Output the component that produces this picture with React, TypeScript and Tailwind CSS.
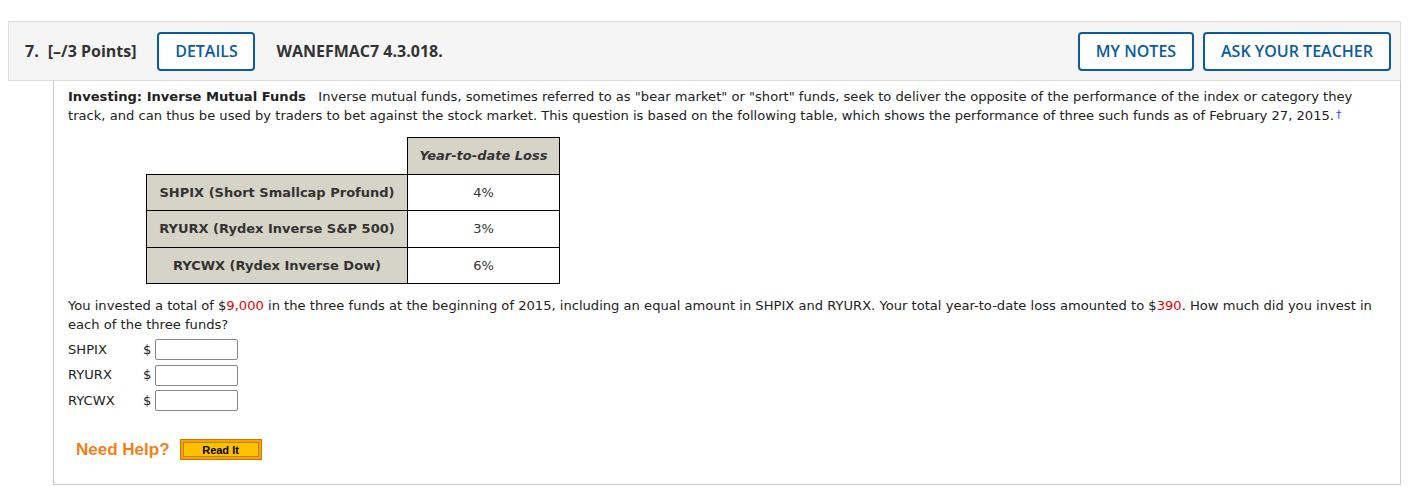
import React from "react";

const rows = [
  { name: "SHPIX (Short Smallcap Profund)", loss: "4%" },
  { name: "RYURX (Rydex Inverse S&P 500)", loss: "3%" },
  { name: "RYCWX (Rydex Inverse Dow)", loss: "6%" },
];

const funds = ["SHPIX", "RYURX", "RYCWX"];

function OutlineButton({ label, className = "" }: { label: string; className?: string }) {
  return (
    <button
      className={`h-[39px] rounded-[4px] border-2 border-[#0b5c9e] bg-white text-[16px] font-semibold text-[#0b5c9e] ${className}`}
    >
      {label}
    </button>
  );
}

export default function App() {
  return (
    <div className="min-h-[487px] w-[1418px] bg-white pl-2 pt-[21px]">
      <div className="w-[1393px]">
        <div
          className="flex h-[60px] items-center border border-[#dedede] bg-[#f5f5f5] pl-4 pr-[9px] text-[#333]"
          style={{ fontFamily: '"Open Sans", "Noto Sans", sans-serif' }}
        >
          <span className="text-[16px] font-bold">7.</span>
          <span className="ml-[9px] text-[16px] font-bold">[–/3 Points]</span>
          <OutlineButton label="DETAILS" className="ml-[21px] w-[98px]" />
          <span className="ml-[21px] text-[16px] font-bold">WANEFMAC7 4.3.018.</span>
          <div className="ml-auto flex gap-[9px]">
            <OutlineButton label="MY NOTES" className="w-[116px]" />
            <OutlineButton label="ASK YOUR TEACHER" className="w-[188px]" />
          </div>
        </div>

        <div
          className="ml-[45px] h-[404px] border-x border-b border-[#cccccc] pl-[14px] pr-4 pt-[6px] text-[13.1px] text-[#222]"
          style={{ fontFamily: '"DejaVu Sans", Verdana, sans-serif' }}
        >
          <p className="leading-[19px]">
            <b>Investing: Inverse Mutual Funds</b>
            {"\u00a0\u00a0 "}Inverse mutual funds, sometimes referred to as "bear market" or "short" funds, seek to
            deliver the opposite of the performance of the index or category they track, and can thus be used by
            traders to bet against the stock market. This question is based on the following table, which shows the
            performance of three such funds as of February 27, 2015.
            <span className="relative -top-[2px] ml-[2px] text-[11px] text-[#3b3bff]">†</span>
          </p>

          <table className="ml-[78px] mt-[11px] border-collapse text-[13px]">
            <tbody>
              <tr>
                <td className="w-[261px]"></td>
                <td className="h-[36.5px] w-[152px] border border-black bg-[#d6d3c7] text-center font-bold italic text-[#333]">
                  Year-to-date Loss
                </td>
              </tr>
              {rows.map((r) => (
                <tr key={r.name}>
                  <td className="h-[36.5px] border border-black bg-[#d6d3c7] text-center font-bold text-[#333]">
                    {r.name}
                  </td>
                  <td className="border border-black text-center text-[#333]">{r.loss}</td>
                </tr>
              ))}
            </tbody>
          </table>

          <p className="mt-[12px] leading-[19px]">
            You invested a total of $<span className="text-[#e50000]">9,000</span> in the three funds at the beginning
            of 2015, including an equal amount in SHPIX and RYURX. Your total year-to-date loss amounted to $
            <span className="text-[#e50000]">390</span>. How much did you invest in each of the three funds?
          </p>

          <div className="mt-[5px] flex flex-col gap-[4.5px]">
            {funds.map((f) => (
              <div key={f} className="flex h-[21px] items-center">
                <span className="w-[75px]">{f}</span>
                <span className="w-[12px]">$</span>
                <input className="h-[21px] w-[83px] rounded-[2px] border border-[#888] bg-white" />
              </div>
            ))}
          </div>

          <div
            className="ml-[8px] mt-[26px] flex items-center"
            style={{ fontFamily: '"Liberation Sans", Arial, sans-serif' }}
          >
            <span className="text-[17px] font-bold text-[#f57f17]">Need Help?</span>
            <button className="ml-[10px] flex h-[21px] w-[82px] items-center justify-center border border-[#c77a00] bg-[#ff9f00] p-[2px]">
              <span className="flex h-full w-full items-center justify-center border border-[#b8860b] bg-[#ffc000] text-[11px] font-bold text-black">
                Read It
              </span>
            </button>
          </div>
        </div>
      </div>
    </div>
  );
}
